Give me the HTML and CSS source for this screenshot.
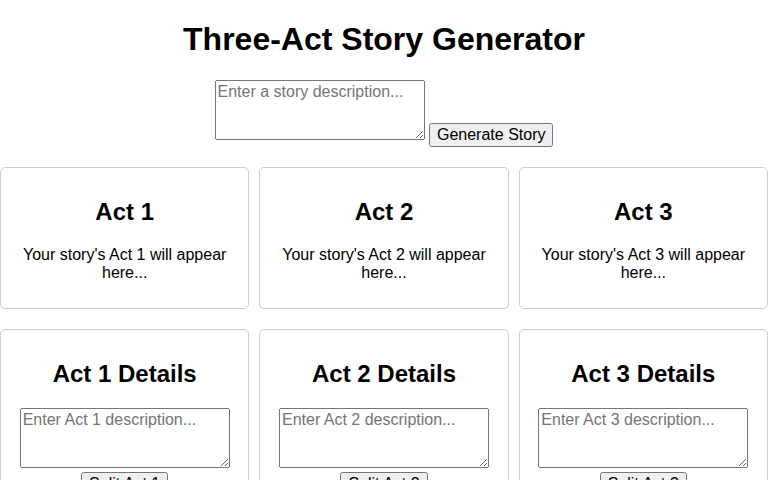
FILE: index.html
```html
<!DOCTYPE html>
<html>
<head>
<meta charset="utf-8">
<title>Three-Act Story Generator</title>
<link rel="stylesheet" href="styles.css">
</head>
<body>
<h1 class="title">Three-Act Story Generator</h1>
<div class="form">
<textarea class="story-input" placeholder="Enter a story description..."></textarea>
<button class="btn">Generate Story</button>
</div>
<div class="acts">
  <div class="card"><h2>Act 1</h2><p>Your story's Act 1 will appear here...</p></div>
  <div class="card"><h2>Act 2</h2><p>Your story's Act 2 will appear here...</p></div>
  <div class="card"><h2>Act 3</h2><p>Your story's Act 3 will appear here...</p></div>
</div>
<div class="acts details">
  <div class="card"><h2>Act 1 Details</h2><textarea class="story-input" placeholder="Enter Act 1 description..."></textarea> <button class="btn">Split Act 1</button></div>
  <div class="card"><h2>Act 2 Details</h2><textarea class="story-input" placeholder="Enter Act 2 description..."></textarea> <button class="btn">Split Act 2</button></div>
  <div class="card"><h2>Act 3 Details</h2><textarea class="story-input" placeholder="Enter Act 3 description..."></textarea> <button class="btn">Split Act 3</button></div>
</div>
</body>
</html>
```
FILE: styles.css
```css
body {
  margin: 0;
  font-family: "Liberation Sans", Arial, sans-serif;
  background: #fff;
  color: #000;
  text-align: center;
}
.title {
  font-size: 32px;
  margin: 0.67em 0;
}
.form {
  margin-bottom: 20px;
}
.story-input {
  width: 210px;
  height: 60px;
  box-sizing: border-box;
  font-family: "Liberation Sans", Arial, sans-serif;
  font-size: 16px;
  padding: 2px;
  vertical-align: baseline;
}
.btn {
  font-family: "Liberation Sans", Arial, sans-serif;
  font-size: 16px;
}
.acts {
  display: flex;
  gap: 10px;
}
.details {
  margin-top: 20px;
}
.card {
  flex: 1;
  border: 1px solid #ccc;
  border-radius: 5px;
  padding: 10px;
}
.card h2 {
  font-size: 24px;
  margin: 0.83em 0;
}
.card p {
  font-size: 16px;
  margin: 16px 0;
}
```
